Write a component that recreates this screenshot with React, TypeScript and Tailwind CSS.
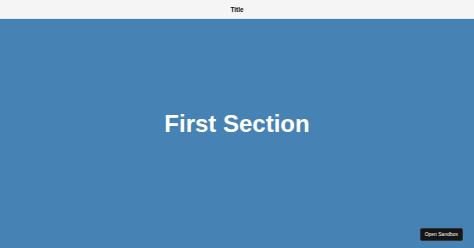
export default function App() {
  return (
    <div className="relative h-[248px] w-full overflow-hidden font-['Liberation_Sans',Arial,sans-serif]">
      {/* header */}
      <header className="absolute inset-x-0 top-0 z-10 flex h-[19px] items-center justify-center border-b border-[#dfe9f3] bg-[#f5f5f5] pt-[1px]">
        <span className="text-[6.5px] font-bold text-[#111]">Title</span>
      </header>
      {/* section */}
      <section className="flex h-[248px] items-center justify-center bg-[#4682b4]">
        <h1 className="text-[24px] font-bold text-white">First Section</h1>
      </section>
      <button className="absolute bottom-[7px] right-[11px] flex h-[13px] items-center rounded-[2px] border border-[#333] bg-[#151515] px-[4px] text-[5px] leading-none text-white">
        Open Sandbox
      </button>
    </div>
  );
}
